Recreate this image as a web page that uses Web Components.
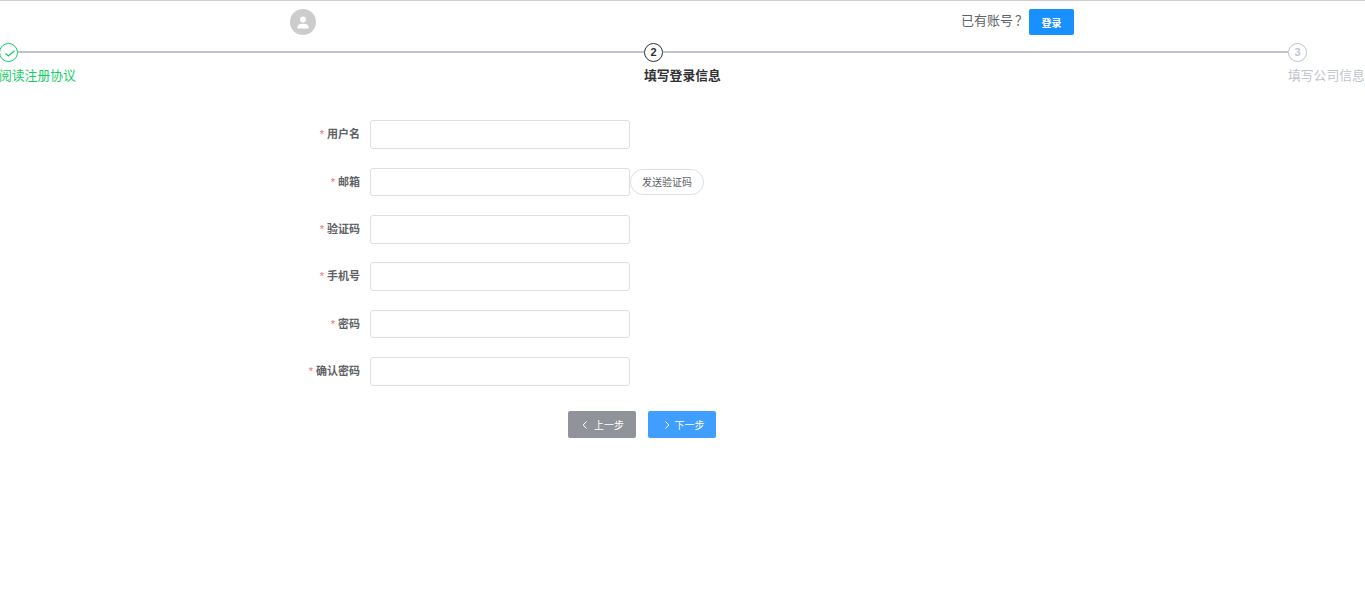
<!DOCTYPE html>
<html lang="zh">
<head>
<meta charset="utf-8">
<title>注册</title>
<style>
  html, body { margin: 0; background: #fff; }
  body { font-family: "Liberation Sans", "Noto Sans CJK SC", sans-serif; color: #606266; }
</style>
</head>
<body>
<reg-header></reg-header>
<reg-steps>
  <reg-step state="done" num="1" label="阅读注册协议"></reg-step>
  <reg-step state="active" num="2" label="填写登录信息"></reg-step>
  <reg-step state="wait" num="3" label="填写公司信息" last></reg-step>
</reg-steps>
<reg-form>
  <reg-field label="用户名"></reg-field>
  <reg-field label="邮箱"><reg-code-btn>发送验证码</reg-code-btn></reg-field>
  <reg-field label="验证码"></reg-field>
  <reg-field label="手机号"></reg-field>
  <reg-field label="密码"></reg-field>
  <reg-field label="确认密码"></reg-field>
  <reg-nav-btn slot="actions" kind="prev">上一步</reg-nav-btn>
  <reg-nav-btn slot="actions" kind="next">下一步</reg-nav-btn>
</reg-form>

<script>
class RegHeader extends HTMLElement {
  constructor() {
    super();
    this.attachShadow({ mode: 'open' }).innerHTML = `
      <style>
        :host {
          display: flex;
          justify-content: space-between;
          align-items: center;
          height: 42px;
          padding: 0 291px 0 290px;
          border-top: 1px solid #ccc;
          box-sizing: content-box;
        }
        .avatar {
          width: 26px;
          height: 26px;
          border-radius: 50%;
          background: #ccc;
          display: flex;
          align-items: center;
          justify-content: center;
        }
        .login { display: flex; align-items: center; gap: 1px; }
        .login span { font-size: 13px; color: #606266; padding-bottom: 5px; }
        .login b { font-weight: 400; margin-left: 2px; }
        button {
          width: 45px;
          height: 26px;
          padding: 0;
          border: 0;
          border-radius: 2px;
          background: #1890ff;
          color: #fff;
          font: 700 10px "Liberation Sans", "Noto Sans CJK SC", sans-serif;
        }
      </style>
      <div class="avatar">
        <svg width="12" height="13" viewBox="0 0 12 13" fill="#fff">
          <circle cx="6" cy="3.4" r="3"/>
          <path d="M.5 12.5V11c0-2.2 2.4-3.2 5.5-3.2s5.500 1 5.500 3.200v1.500z"/>
        </svg>
      </div>
      <div class="login"><span>已有账号<b>？</b></span><button>登录</button></div>
    `;
  }
}
customElements.define('reg-header', RegHeader);

class RegSteps extends HTMLElement {
  constructor() {
    super();
    this.attachShadow({ mode: 'open' }).innerHTML = `
      <style>
        :host { display: flex; overflow: hidden; }
      </style>
      <slot></slot>
    `;
  }
}
customElements.define('reg-steps', RegSteps);

class RegStep extends HTMLElement {
  connectedCallback() {
    if (this.shadowRoot) return;
    const state = this.getAttribute('state');
    const colors = { done: '#13ce66', active: '#303133', wait: '#c0c4cc' };
    const color = colors[state];
    const mark = state === 'done'
      ? `<svg width="12" height="12" viewBox="0 0 12 12" fill="none" stroke="${color}" stroke-width="1.3"><path d="M2.500 6.500l2.800 2.500L11.500 3.800"/></svg>`
      : this.getAttribute('num');
    let basis = '644px';
    if (state === 'done') basis = '645px';
    if (this.hasAttribute('last')) basis = '77px';
    this.attachShadow({ mode: 'open' }).innerHTML = `
      <style>
        :host {
          display: block;
          flex: 0 0 ${basis};
          margin-left: ${state === 'done' ? '-1px' : '0'};
          color: ${color};
          white-space: nowrap;
        }
        .head { display: flex; height: 19px; }
        .circle {
          flex: none;
          width: 19px;
          height: 19px;
          box-sizing: border-box;
          border: 1px solid currentColor;
          border-radius: 50%;
          display: flex;
          align-items: center;
          justify-content: center;
          font-size: 11px;
          font-weight: 700;
          line-height: 1;
        }
        .line { flex: 1; height: 2px; margin-top: 8px; background: #c0c4cc; }
        .title {
          margin-top: 4px;
          font-size: 12.8px;
          line-height: 20px;
          font-weight: ${state === 'active' ? 700 : 400};
        }
      </style>
      <div class="head"><div class="circle">${mark}</div>${this.hasAttribute('last') ? '' : '<div class="line"></div>'}</div>
      <div class="title">${this.getAttribute('label')}</div>
    `;
  }
}
customElements.define('reg-step', RegStep);

class RegForm extends HTMLElement {
  constructor() {
    super();
    this.attachShadow({ mode: 'open' }).innerHTML = `
      <style>
        :host {
          display: block;
          width: 744px;
          margin: 34.4px 0 0 270px;
        }
        .rows { display: flex; flex-direction: column; gap: 18.75px; }
        .actions { display: flex; justify-content: center; gap: 12px; margin-top: 25.4px; }
      </style>
      <div class="rows"><slot></slot></div>
      <div class="actions"><slot name="actions"></slot></div>
    `;
  }
}
customElements.define('reg-form', RegForm);

class RegField extends HTMLElement {
  connectedCallback() {
    if (this.shadowRoot) return;
    this.attachShadow({ mode: 'open' }).innerHTML = `
      <style>
        :host { display: flex; align-items: center; height: 28.6px; }
        label {
          flex: none;
          width: 100px;
          padding-right: 10px;
          padding-bottom: 3px;
          box-sizing: border-box;
          text-align: right;
          font-size: 11px;
          font-weight: 700;
          color: #606266;
        }
        i { font-style: normal; font-weight: 400; color: #f56c6c; margin-right: 3px; }
        input {
          flex: none;
          width: 260px;
          height: 100%;
          box-sizing: border-box;
          border: 1px solid #dcdfe6;
          border-radius: 3px;
          background: #fff;
          outline: 0;
          padding: 0 10px;
        }
      </style>
      <label><i>*</i>${this.getAttribute('label')}</label>
      <input type="text"><slot></slot>
    `;
  }
}
customElements.define('reg-field', RegField);

class RegCodeBtn extends HTMLElement {
  constructor() {
    super();
    this.attachShadow({ mode: 'open' }).innerHTML = `
      <style>
        :host {
          display: flex;
          align-items: center;
          justify-content: center;
          width: 74px;
          height: 26px;
          box-sizing: border-box;
          padding-bottom: 1px;
          border: 1px solid #dcdfe6;
          border-radius: 13px;
          font-size: 10px;
          color: #606266;
        }
      </style>
      <slot></slot>
    `;
  }
}
customElements.define('reg-code-btn', RegCodeBtn);

class RegNavBtn extends HTMLElement {
  connectedCallback() {
    if (this.shadowRoot) return;
    const prev = this.getAttribute('kind') === 'prev';
    this.attachShadow({ mode: 'open' }).innerHTML = `
      <style>
        :host {
          display: flex;
          align-items: center;
          justify-content: center;
          box-sizing: border-box;
          gap: ${prev ? '6px' : '5px'};
          padding-left: ${prev ? '2px' : '4px'};
          width: 68px;
          height: 27px;
          border-radius: 2px;
          background: ${prev ? '#909399' : '#409eff'};
          color: #fff;
          font-size: 10px;
        }
      </style>
      <svg width="6" height="8" viewBox="0 0 6 8" fill="none" stroke="#fff" stroke-width="1">
        <path d="${prev ? 'M4.500 .5L1.200 4l3.300 3.500' : 'M1.500 .5L4.800 4 1.500 7.500'}"/>
      </svg>
      <slot></slot>
    `;
  }
}
customElements.define('reg-nav-btn', RegNavBtn);
</script>
</body>
</html>
